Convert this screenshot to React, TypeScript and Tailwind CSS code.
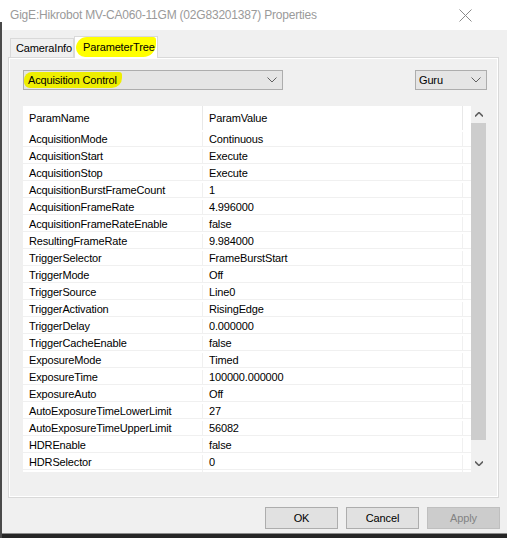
import React from 'react';

const rows: [string, string][] = [
  ['AcquisitionMode', 'Continuous'],
  ['AcquisitionStart', 'Execute'],
  ['AcquisitionStop', 'Execute'],
  ['AcquisitionBurstFrameCount', '1'],
  ['AcquisitionFrameRate', '4.996000'],
  ['AcquisitionFrameRateEnable', 'false'],
  ['ResultingFrameRate', '9.984000'],
  ['TriggerSelector', 'FrameBurstStart'],
  ['TriggerMode', 'Off'],
  ['TriggerSource', 'Line0'],
  ['TriggerActivation', 'RisingEdge'],
  ['TriggerDelay', '0.000000'],
  ['TriggerCacheEnable', 'false'],
  ['ExposureMode', 'Timed'],
  ['ExposureTime', '100000.000000'],
  ['ExposureAuto', 'Off'],
  ['AutoExposureTimeLowerLimit', '27'],
  ['AutoExposureTimeUpperLimit', '56082'],
  ['HDREnable', 'false'],
  ['HDRSelector', '0'],
];

function Chevron() {
  return (
    <svg width="10" height="6" viewBox="0 0 10 6" className="shrink-0">
      <path d="M0.5 0.5 L5 5 L9.5 0.5" fill="none" stroke="#606060" strokeWidth="1" />
    </svg>
  );
}

function ScrollArrow({ up }: { up?: boolean }) {
  return (
    <svg width="8" height="5" viewBox="0 0 8 5">
      <path d={up ? 'M0 4.5 L4 0.5 L8 4.5' : 'M0 0.5 L4 4.5 L8 0.5'} fill="none" stroke="#606060" strokeWidth="1.6" />
    </svg>
  );
}

export default function App() {
  return (
    <div className="relative flex h-[538px] w-[507px] flex-col overflow-hidden bg-[#f0f0f0] font-['Liberation_Sans',Arial,sans-serif] text-[11px] tracking-[-0.15px] text-black">
      {/* title bar */}
      <div className="flex h-[30px] shrink-0 items-center justify-between bg-white pl-[10px] pr-[35px]">
        <span className="text-[12px] tracking-[-0.2px] text-[#9a9a9a]">GigE:Hikrobot MV-CA060-11GM (02G83201387) Properties</span>
        <svg width="13" height="13" viewBox="0 0 13 13">
          <path d="M0.5 0.5 L12.5 12.5 M12.5 0.5 L0.5 12.5" stroke="#8a8a8a" strokeWidth="1" />
        </svg>
      </div>

      <div className="flex flex-1 flex-col pt-[6px]">
        {/* tabs */}
        <div className="flex h-[21px] items-end pl-[10px]">
          <div className="flex h-[19px] w-[64px] items-center border border-b-0 border-[#d9d9d9] bg-[#f0f0f0] pl-[5px]">
            CameraInfo
          </div>
          <div className="relative z-10 -mb-px flex h-[22px] w-[84px] items-start border border-b-0 border-[#d9d9d9] bg-white pl-px">
            <span className="flex h-[20px] w-[80px] items-center rounded-[12px_3px_14px_10px] bg-[#ffff00] pl-[7px]">ParameterTree</span>
          </div>
        </div>

        {/* panel */}
        <div className="mx-[8px] h-[441px] border border-[#d9d9d9] bg-white p-px">
          <div className="flex h-full flex-col bg-[#f0f0f0] pl-[13px] pr-[10px] pt-[11px]">
            <div className="flex items-center justify-between">
              <div className="flex h-[20px] w-[260px] items-center justify-between border border-[#adadad] bg-[#e5e5e5] pl-0 pr-[5px]">
                <span className="flex h-[16px] items-center rounded-[8px_3px_10px_6px] bg-[#eeee00] pl-[4px] pr-[5px]">Acquisition Control</span>
                <Chevron />
              </div>
              <div className="flex h-[20px] w-[72px] items-center justify-between border border-[#adadad] bg-[#e5e5e5] pl-[3px] pr-[5px]">
                <span>Guru</span>
                <Chevron />
              </div>
            </div>

            {/* grid */}
            <div className="mt-[16px] flex h-[366px]">
              <div className="w-[448px] overflow-hidden bg-white">
                <div className="flex h-[24px]">
                  <div className="flex w-[180px] items-center border-r border-[#e8e8e8] pl-[6px]">ParamName</div>
                  <div className="flex w-[260px] items-center border-r border-[#e8e8e8] pl-[6px]">ParamValue</div>
                </div>
                {rows.map(([name, value]) => (
                  <div key={name} className="flex h-[17px] border-b border-[#f0f0f0] pt-[2px]">
                    <div className="flex w-[180px] items-center border-r border-[#f0f0f0] pl-[6px]">{name}</div>
                    <div className="flex w-[260px] items-center border-r border-[#f0f0f0] pl-[6px]">{value}</div>
                  </div>
                ))}
                <div className="flex h-[17px]">
                  <div className="w-[180px] border-r border-[#f0f0f0]" />
                  <div className="w-[260px] border-r border-[#f0f0f0]" />
                </div>
              </div>
              <div className="flex w-[15px] flex-col bg-[#f0f0f0]">
                <div className="flex h-[17px] items-center justify-center">
                  <ScrollArrow up />
                </div>
                <div className="h-[317px] bg-[#cdcdcd]" />
                <div className="flex-1" />
                <div className="flex h-[17px] items-center justify-center">
                  <ScrollArrow />
                </div>
              </div>
            </div>
          </div>
        </div>

        {/* buttons */}
        <div className="flex justify-end gap-[8px] pr-[7px] pt-[9px]">
          <button className="h-[22px] w-[73px] border border-[#adadad] bg-[#e1e1e1]">OK</button>
          <button className="h-[22px] w-[73px] border border-[#adadad] bg-[#e1e1e1]">Cancel</button>
          <button className="h-[22px] w-[73px] border border-[#bfbfbf] bg-[#cccccc] text-[#838383]">Apply</button>
        </div>
      </div>

      {/* desktop behind window */}
      <div className="h-[5px] shrink-0 border-t border-[#8c8c8c] bg-[#262626]" />
      <div className="absolute bottom-0 left-0 top-[22px] w-[2px] bg-[#4a4a4a]" />
    </div>
  );
}
